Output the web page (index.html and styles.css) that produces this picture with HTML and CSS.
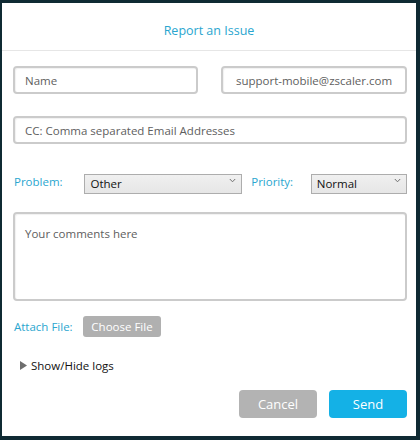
FILE: index.html
```html
<!DOCTYPE html>
<html lang="en">
<head>
  <meta charset="UTF-8">
  <meta name="viewport" content="width=device-width, initial-scale=1.0">
  <title>Report an Issue</title>
  <link rel="stylesheet" href="styles.css">
</head>
<body>
  <div class="dialog">
    <div class="dialog-header">Report an Issue</div>

    <form class="dialog-body">
      <div class="row-two">
        <input class="field" type="text" placeholder="Name">
        <input class="field field-center" type="text" placeholder="support-mobile@zscaler.com">
      </div>

      <input class="field field-cc" type="text" placeholder="CC: Comma separated Email Addresses">

      <div class="row-selects">
        <label class="label label-problem">Problem:</label>
        <div class="select-wrap select-problem">
          <select class="select">
            <option>Other</option>
          </select>
          <svg class="chevron" width="7" height="5" viewBox="0 0 7 5"><path d="M0.8 1 L3.5 3.8 L6.2 1" fill="none" stroke="#707070" stroke-width="1"/></svg>
        </div>
        <label class="label label-priority">Priority:</label>
        <div class="select-wrap select-priority">
          <select class="select">
            <option>Normal</option>
          </select>
          <svg class="chevron" width="7" height="5" viewBox="0 0 7 5"><path d="M0.8 1 L3.5 3.8 L6.2 1" fill="none" stroke="#707070" stroke-width="1"/></svg>
        </div>
      </div>

      <textarea class="comments" placeholder="Your comments here"></textarea>

      <div class="row-attach">
        <span class="label label-attach">Attach File:</span>
        <button type="button" class="btn-file">Choose File</button>
      </div>

      <div class="logs-toggle">
        <svg class="triangle" width="7" height="9" viewBox="0 0 7 9"><path d="M0 0 L7 4.5 L0 9 Z" fill="#6e6e6e"/></svg>
        <span>Show/Hide logs</span>
      </div>

      <div class="actions">
        <button type="button" class="btn btn-cancel">Cancel</button>
        <button type="button" class="btn btn-send">Send</button>
      </div>
    </form>
  </div>
</body>
</html>
```

FILE: styles.css
```css
body {
  margin: 0;
  background: #0f2a33;
  font-family: "Open Sans", "Noto Sans", sans-serif;
  width: 420px;
  height: 440px;
  overflow: hidden;
}

.dialog {
  margin: 3px 0 0 2px;
  width: 414px;
  height: 433px;
  background: #fff;
}

.dialog-header {
  height: 48px;
  border-bottom: 1px solid #e6e6e6;
  display: flex;
  align-items: center;
  justify-content: center;
  color: #2aa6cf;
  font-size: 12.5px;
  padding-top: 7px;
  box-sizing: border-box;
}

.dialog-body {
  padding: 15px 9px 0 11px;
  display: flex;
  flex-direction: column;
}

.row-two {
  display: grid;
  grid-template-columns: 185px 186px;
  column-gap: 23px;
}

.field {
  box-sizing: border-box;
  height: 28px;
  border: 2px solid #cbcbcb;
  border-radius: 4px;
  padding: 0 10px;
  font-family: inherit;
  font-size: 11.5px;
  color: #333;
  outline: none;
  box-shadow: inset 1px 1px 1px rgba(0, 0, 0, 0.06);
}

.field::placeholder {
  color: #5e5e5e;
}

.field-center {
  text-align: center;
  padding: 0 4px;
}

.field-cc {
  margin-top: 22px;
  width: 394px;
}

.row-selects {
  margin-top: 27px;
  display: flex;
  align-items: center;
  height: 20px;
}

.label {
  color: #2aa6cf;
  font-size: 11.5px;
}

.label-problem {
  width: 71px;
  margin-left: 1px;
}

.label-priority {
  width: 60px;
  margin-left: 9px;
}

.select-wrap {
  position: relative;
  height: 20px;
}

.select-problem {
  width: 159px;
}

.select-priority {
  width: 97px;
}

.select {
  appearance: none;
  -webkit-appearance: none;
  box-sizing: border-box;
  width: 100%;
  height: 20px;
  margin: 0;
  border: 1px solid #adadad;
  border-radius: 0;
  background: linear-gradient(#f0f0f0, #e6e6e6);
  font-family: inherit;
  font-size: 11.5px;
  color: #111;
  padding: 0 0 0 5px;
  outline: none;
}

.chevron {
  position: absolute;
  right: 6px;
  top: 7px;
}

.comments {
  margin-top: 21px;
  box-sizing: border-box;
  width: 394px;
  height: 89px;
  border: 2px solid #cbcbcb;
  border-radius: 4px;
  padding: 12px 10px;
  font-family: inherit;
  font-size: 11.5px;
  resize: none;
  outline: none;
  box-shadow: inset 1px 1px 1px rgba(0, 0, 0, 0.06);
}

.comments::placeholder {
  color: #5e5e5e;
}

.row-attach {
  margin-top: 15px;
  display: flex;
  align-items: center;
  height: 21px;
}

.label-attach {
  width: 69px;
  margin-left: 1px;
}

.btn-file {
  height: 21px;
  width: 78px;
  border: none;
  border-radius: 3px;
  background: #b0b0b0;
  color: #fff;
  font-family: inherit;
  font-size: 11.5px;
  padding: 0;
}

.logs-toggle {
  margin-top: 20px;
  margin-left: 7px;
  display: flex;
  align-items: center;
  gap: 4px;
  height: 16px;
  font-size: 11.5px;
  color: #111;
}

.actions {
  margin-top: 17px;
  display: flex;
  justify-content: flex-end;
  gap: 12px;
}

.btn {
  width: 78px;
  height: 28px;
  border: none;
  border-radius: 4px;
  color: #fff;
  font-family: inherit;
  font-size: 13px;
  padding: 0;
}

.btn-cancel {
  background: #b3b3b3;
}

.btn-send {
  background: #14b1e6;
}
```
